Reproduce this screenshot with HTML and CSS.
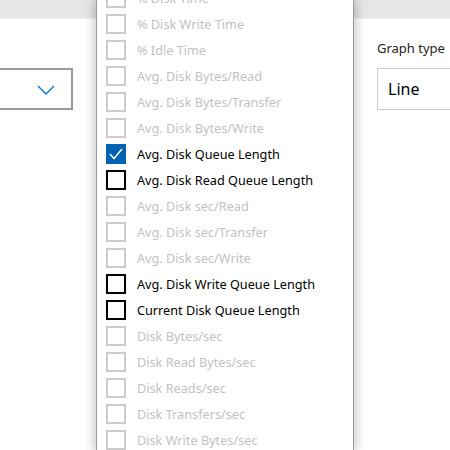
FILE: index.html
```html
<!DOCTYPE html>
<html>
<head>
<meta charset="utf-8">
<link rel="stylesheet" href="styles.css">
</head>
<body>
<div class="topbar"></div>
<div class="content">
  <div class="field left">
    <div class="select">
      <svg class="chev" width="18" height="10" viewBox="0 0 18 10"><polyline points="1,1 9,9 17,1" fill="none" stroke="#0078d7" stroke-width="1.4"/></svg>
    </div>
  </div>
  <div class="field right">
    <div class="label">Graph type</div>
    <div class="select plain"><span>Line</span></div>
  </div>
</div>
<div class="panel">
  <ul class="list">
    <li class="off"><span class="box"></span>% Disk Time</li>
    <li class="off"><span class="box"></span>% Disk Write Time</li>
    <li class="off"><span class="box"></span>% Idle Time</li>
    <li class="off"><span class="box"></span>Avg. Disk Bytes/Read</li>
    <li class="off"><span class="box"></span>Avg. Disk Bytes/Transfer</li>
    <li class="off"><span class="box"></span>Avg. Disk Bytes/Write</li>
    <li class="checked"><span class="box"><svg width="20" height="20" viewBox="0 0 20 20"><polyline points="4,10 8,14.5 16,5" fill="none" stroke="#fff" stroke-width="1.5"/></svg></span>Avg. Disk Queue Length</li>
    <li><span class="box"></span>Avg. Disk Read Queue Length</li>
    <li class="off"><span class="box"></span>Avg. Disk sec/Read</li>
    <li class="off"><span class="box"></span>Avg. Disk sec/Transfer</li>
    <li class="off"><span class="box"></span>Avg. Disk sec/Write</li>
    <li><span class="box"></span>Avg. Disk Write Queue Length</li>
    <li><span class="box"></span>Current Disk Queue Length</li>
    <li class="off"><span class="box"></span>Disk Bytes/sec</li>
    <li class="off"><span class="box"></span>Disk Read Bytes/sec</li>
    <li class="off"><span class="box"></span>Disk Reads/sec</li>
    <li class="off"><span class="box"></span>Disk Transfers/sec</li>
    <li class="off"><span class="box"></span>Disk Write Bytes/sec</li>
  </ul>
</div>
</body>
</html>
```
FILE: styles.css
```css
html, body {
  margin: 0;
  padding: 0;
  width: 450px;
  height: 450px;
  overflow: hidden;
  background: #fff;
  font-family: "Noto Sans", "Open Sans", sans-serif;
  color: #000;
}
.topbar {
  height: 18px;
  background: #e6e6e6;
  border-bottom: 1px solid #f2f2f2;
}
.content {
  display: flex;
  justify-content: space-between;
  padding-top: 20px;
  overflow: hidden;
}
.field.left {
  padding-top: 29px;
}
.label {
  font-size: 13px;
  line-height: 18px;
  height: 29px;
  color: #222;
}
.select {
  box-sizing: border-box;
  height: 42px;
  width: 73px;
  border: 2px solid #999;
  border-left: none;
  display: flex;
  align-items: center;
  justify-content: flex-end;
  padding-right: 16px;
}
.select.plain {
  width: 73px;
  border: 1px solid #cccccc;
  border-right: none;
  justify-content: flex-start;
  padding-left: 10px;
  font-size: 16px;
}
.chev {
  display: block;
  margin-top: 1px;
}
.panel {
  position: absolute;
  left: 96px;
  top: 0;
  width: 256px;
  height: 450px;
  background: #fff;
  border-left: 1px solid #9a9a9a;
  border-right: 1px solid #9a9a9a;
  box-shadow: 0 0 10px 2px rgba(0,0,0,0.22);
  overflow: hidden;
}
.list {
  list-style: none;
  margin: -15px 0 0 0;
  padding: 0 0 0 9px;
}
.list li {
  height: 26px;
  display: flex;
  align-items: center;
  font-size: 12.7px;
  color: #000;
}
.list li.off {
  color: #c2c2c2;
}
.box {
  box-sizing: border-box;
  width: 20px;
  height: 20px;
  border: 2px solid #000;
  margin-right: 11px;
  flex: none;
  position: relative;
}
.off .box {
  border-color: #cccccc;
}
.checked .box {
  background: #0063b1;
  border-color: #0063b1;
}
.checked .box svg {
  position: absolute;
  left: -2px;
  top: -2px;
}
```
